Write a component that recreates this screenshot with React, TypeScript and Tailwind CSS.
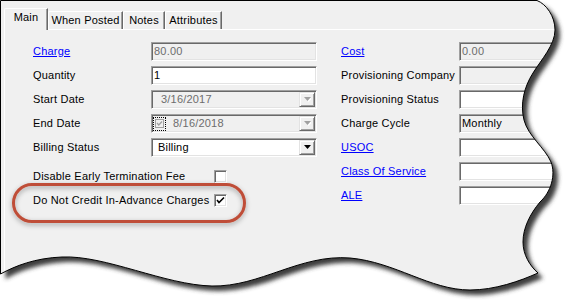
import React from "react";
import clsx from "clsx";

// outline of the torn screenshot edge
const PAPER =
  "M0.5,0.5 H537 C546,4 555,16 555,30 C555,45 541,60 533,73 C524,87 520,104 524,120 C528,136 545,148 551,162 C556,175 551,192 540,202 C530,214 523,228 523,242 C523,255 530,266 538,273 C520,281 495,290 470,290 C430,290 395,262 350,258 C300,254 260,287 212,286 C165,285 105,255 62,257 C35,258 15,266 0.5,274 Z";

const Arrow = ({ disabled }: { disabled?: boolean }) => (
  <div className="ml-auto mr-[1px] flex h-[15px] w-[16px] items-center justify-center border border-t-[#e3e3e3] border-l-[#e3e3e3] border-b-[#696969] border-r-[#696969] bg-[#f0f0f0] shadow-[inset_1px_1px_0_#fff,inset_-1px_-1px_0_#a0a0a0]">
    <svg width="7" height="5" viewBox="0 0 7 5">
      {disabled && <path d="M1,1 H8 L4.5,5 Z" fill="#fff" />}
      <path d="M0,0 H7 L3.5,4 Z" fill={disabled ? "#a0a0a0" : "#000"} />
    </svg>
  </div>
);

const Box = ({
  white,
  className,
  children,
}: {
  white?: boolean;
  className?: string;
  children?: React.ReactNode;
}) => (
  <div
    className={clsx(
      "flex h-[19px] items-center border border-t-[#a0a0a0] border-l-[#a0a0a0] border-b-white border-r-white shadow-[inset_1px_1px_0_#696969,inset_-1px_-1px_0_#e3e3e3]",
      white ? "bg-white" : "bg-[#f0f0f0]",
      className
    )}
  >
    {children}
  </div>
);

const Label = ({ text, link, w = "w-[118px]" }: { text: string; link?: boolean; w?: string }) => (
  <div className={clsx("shrink-0", w)}>
    <span className={link ? "text-[#0000ff] underline" : "text-black"}>{text}</span>
  </div>
);

const Check = ({ checked }: { checked?: boolean }) => (
  <div className="flex h-[13px] w-[13px] items-center justify-center border border-t-[#a0a0a0] border-l-[#a0a0a0] border-b-white border-r-white bg-white shadow-[inset_1px_1px_0_#696969,inset_-1px_-1px_0_#e3e3e3]">
    {checked && (
      <svg width="9" height="9" viewBox="0 0 9 9">
        <path d="M1,4 L3,6.5 L8,1.5" stroke="#000" strokeWidth="1.6" fill="none" />
      </svg>
    )}
  </div>
);

const Tab = ({ text, active, w }: { text: string; active?: boolean; w: string }) => (
  <div
    className={clsx(
      "flex shrink-0 justify-center rounded-tl-[2px] border-l border-t border-white border-r border-r-[#696969] shadow-[inset_-1px_0_0_#a0a0a0]",
      active ? "relative z-10 -mb-[1px] h-[22px] bg-[#f0f0f0] pt-[2px]" : "h-[18px] pt-[2px]",
      w
    )}
  >
    {text}
  </div>
);

export default function App() {
  const row = "flex h-[19px] items-center";
  return (
    <div className="relative h-[307px] w-[571px] overflow-hidden bg-[#f0f0f0] font-['Liberation_Sans',Arial,sans-serif] text-[11px] leading-[13px] tracking-[0.2px] text-black">
      <div className="flex h-[29px] items-end pl-[4px]">
        <Tab text="Main" active w="w-[44px]" />
        <Tab text="When Posted" w="w-[75px]" />
        <Tab text="Notes" w="w-[42px]" />
        <Tab text="Attributes" w="w-[57px]" />
      </div>

      <div className="ml-[4px] flex h-[300px] border-l border-t border-white pt-[12px]">
        {/* left column */}
        <div className="flex w-[312px] shrink-0 flex-col gap-[5px] pl-[28px]">
          <div className={row}>
            <Label text="Charge" link />
            <Box className="w-[166px] pl-[2px] text-[#6d6d6d]">80.00</Box>
          </div>
          <div className={row}>
            <Label text="Quantity" />
            <Box white className="w-[166px] pl-[2px]">1</Box>
          </div>
          <div className={row}>
            <Label text="Start Date" />
            <Box className="w-[166px] pl-[9px] text-[#6d6d6d]">
              3/16/2017
              <Arrow disabled />
            </Box>
          </div>
          <div className={row}>
            <Label text="End Date" />
            <Box className="w-[166px] pl-[1px] text-[#6d6d6d]">
              <div className="mr-[7px] flex h-[14px] w-[13px] items-center justify-center border border-dotted border-black">
                <svg width="9" height="9" viewBox="0 0 9 9">
                  <rect x="0.5" y="0.5" width="8" height="8" fill="none" stroke="#a0a0a0" />
                  <path d="M2,4 L3.8,6 L7,2.5" stroke="#a0a0a0" strokeWidth="1.3" fill="none" />
                </svg>
              </div>
              8/16/2018
              <Arrow disabled />
            </Box>
          </div>
          <div className={row}>
            <Label text="Billing Status" />
            <Box white className="w-[166px] pl-[6px]">
              Billing
              <Arrow />
            </Box>
          </div>
          <div className={clsx(row, "mt-[5px]")}>
            <Label text="Disable Early Termination Fee" w="w-[181px]" />
            <Check />
          </div>
          <div className={row}>
            <Label text="Do Not Credit In-Advance Charges" w="w-[181px]" />
            <Check checked />
          </div>
        </div>

        {/* right column */}
        <div className="flex flex-col gap-[5px] pl-[24px]">
          <div className={row}>
            <Label text="Cost" link />
            <Box className="w-[120px] pl-[2px] text-[#6d6d6d]">0.00</Box>
          </div>
          <div className={row}>
            <Label text="Provisioning Company" />
            <Box className="w-[120px]" />
          </div>
          <div className={row}>
            <Label text="Provisioning Status" />
            <Box white className="w-[120px]" />
          </div>
          <div className={row}>
            <Label text="Charge Cycle" />
            <Box className="w-[120px] pl-[2px]">Monthly</Box>
          </div>
          <div className={row}>
            <Label text="USOC" link />
            <Box white className="w-[120px]" />
          </div>
          <div className={row}>
            <Label text="Class Of Service" link />
            <Box white className="w-[120px]" />
          </div>
          <div className={row}>
            <Label text="ALE" link />
            <Box white className="w-[120px]" />
          </div>
        </div>
      </div>

      <svg
        className="pointer-events-none absolute left-0 top-0"
        width="571"
        height="307"
        viewBox="0 0 571 307"
      >
        <defs>
          <clipPath id="outside">
            <path clipRule="evenodd" d={`M0,0 H571 V307 H0 Z ${PAPER}`} />
          </clipPath>
          <filter id="blur" x="-10%" y="-10%" width="120%" height="120%">
            <feGaussianBlur stdDeviation="2" />
          </filter>
          <filter id="glow" x="-20%" y="-50%" width="140%" height="200%">
            <feDropShadow dx="0" dy="2" stdDeviation="2.5" floodColor="#000" floodOpacity="0.35" />
          </filter>
        </defs>

        <rect
          x="13.5"
          y="184.5"
          width="231"
          height="37"
          rx="18.5"
          fill="none"
          stroke="#bf4e37"
          strokeWidth="3"
          filter="url(#glow)"
        />

        <g clipPath="url(#outside)">
          <rect width="571" height="307" fill="#fff" />
          <path d={PAPER} transform="translate(5,5)" fill="#3c3c3c" filter="url(#blur)" />
        </g>
        <path d={PAPER} fill="none" stroke="#000" strokeWidth="1" />
      </svg>
    </div>
  );
}
